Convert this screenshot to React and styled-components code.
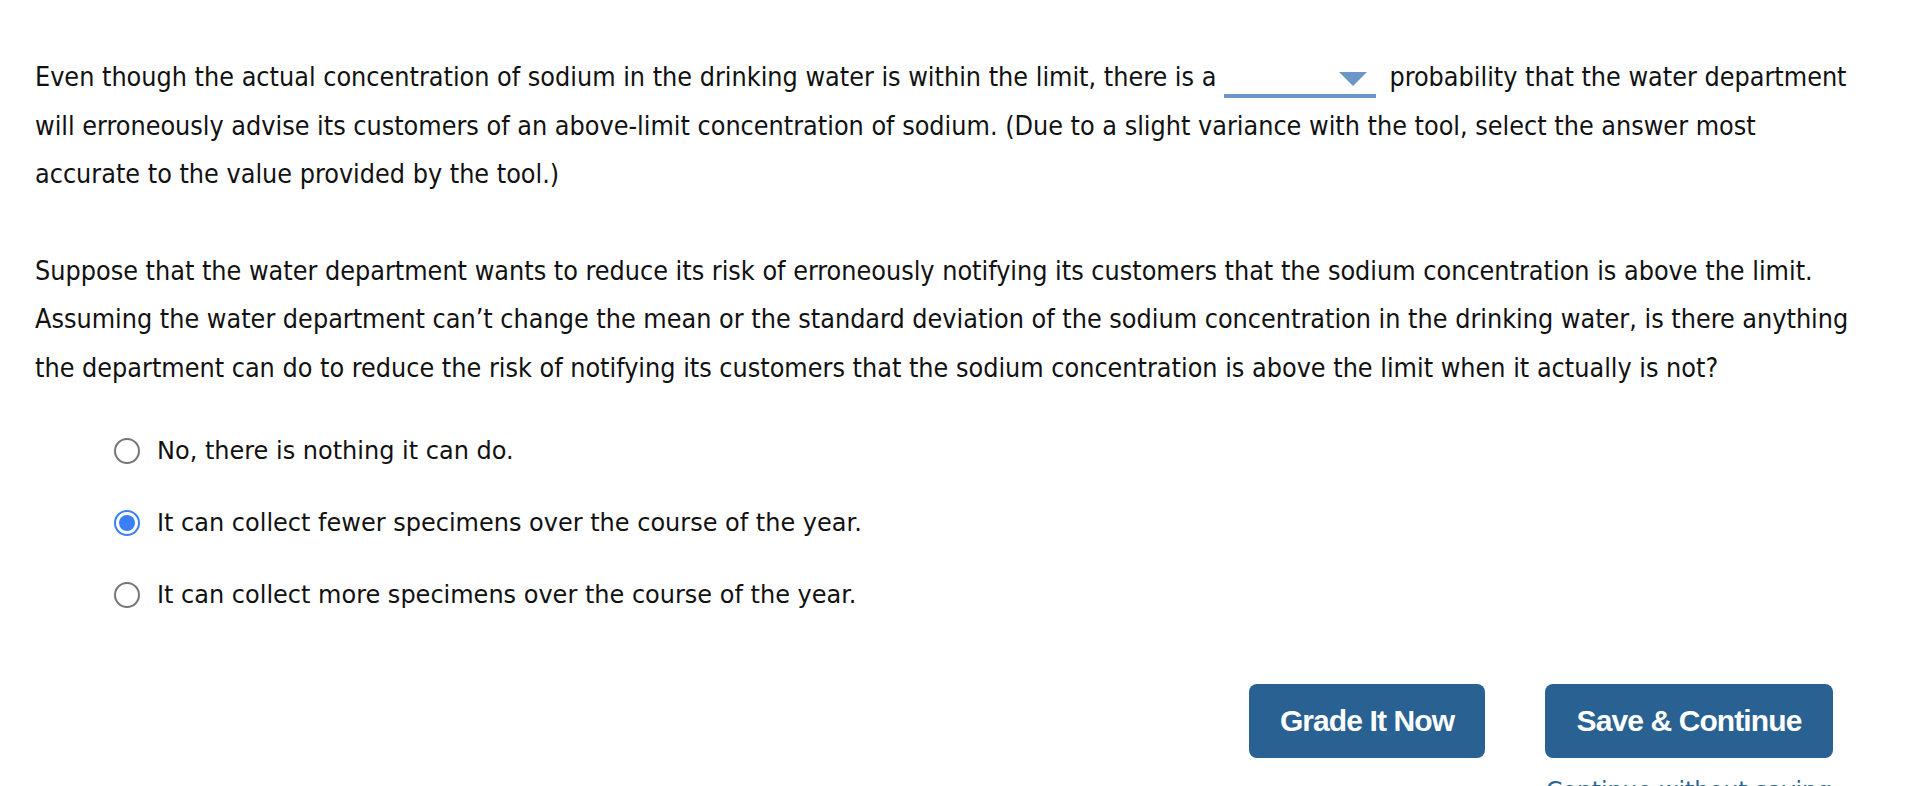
import React, { useState } from 'react';
import styled, { createGlobalStyle } from 'styled-components';

const GlobalStyle = createGlobalStyle`
  html, body {
    margin: 0;
    padding: 0;
    background: #ffffff;
  }
  body {
    font-family: "DejaVu Sans Condensed", "DejaVu Sans", sans-serif;
    color: #111111;
  }
`;

const Page = styled.div`
  padding: 53px 93px 0 35px;
  width: 1926px;
  height: 786px;
  box-sizing: border-box;
  overflow: hidden;
`;

const Paragraph = styled.p`
  margin: 0 -22px 48px 0;
  font-family: "DejaVu Sans Condensed", "DejaVu Sans", sans-serif;
  font-size: 26.7px;
  line-height: 48.5px;
  color: #111111;
`;

const Dropdown = styled.span`
  display: inline-block;
  position: relative;
  width: 152px;
  height: 26px;
  margin: 0 13px 0 8px;
  vertical-align: -12px;
  border-bottom: 4px solid #6a97c8;
`;

const Arrow = styled.span`
  position: absolute;
  right: 9px;
  top: 4px;
  width: 0;
  height: 0;
  border-left: 14.5px solid transparent;
  border-right: 14.5px solid transparent;
  border-top: 14px solid #6a97c8;
`;

const Options = styled.div`
  display: flex;
  flex-direction: column;
  gap: 46px;
  padding-left: 79px;
  margin-top: -2px;
`;

const OptionRow = styled.label`
  display: flex;
  align-items: center;
  gap: 17px;
  height: 26px;
  font-family: "DejaVu Sans", Verdana, sans-serif;
  font-size: 24px;
  color: #111111;
  cursor: pointer;
`;

const Radio = styled.span`
  width: 26px;
  height: 26px;
  box-sizing: border-box;
  border-radius: 50%;
  border: 2px solid ${p => (p.$checked ? '#3a7ff6' : '#777777')};
  display: flex;
  align-items: center;
  justify-content: center;
  flex-shrink: 0;
  &::after {
    content: '';
    width: 16px;
    height: 16px;
    border-radius: 50%;
    background: ${p => (p.$checked ? '#3a7ff6' : 'transparent')};
  }
`;

const ButtonBar = styled.div`
  display: flex;
  justify-content: flex-end;
  gap: 60px;
  margin-top: 76px;
`;

const ButtonColumn = styled.div`
  display: flex;
  flex-direction: column;
  align-items: center;
  gap: 18px;
`;

const ActionButton = styled.button`
  height: 74px;
  width: ${p => p.$w}px;
  border: none;
  border-radius: 8px;
  background: #286192;
  color: #ffffff;
  font-family: "Liberation Sans", Arial, sans-serif;
  font-weight: bold;
  font-size: 30px;
  letter-spacing: -0.9px;
  cursor: pointer;
`;

const SkipLink = styled.a`
  font-family: "DejaVu Sans", sans-serif;
  font-size: 23.5px;
  color: #2a6496;
  text-decoration: none;
`;

const choices = [
  'No, there is nothing it can do.',
  'It can collect fewer specimens over the course of the year.',
  'It can collect more specimens over the course of the year.',
];

export default function App() {
  const [picked, setPicked] = useState(1);

  return (
    <>
      <GlobalStyle />
      <Page>
        <Paragraph>
          Even though the actual concentration of sodium in the drinking water is within the limit, there is a
          <Dropdown>
            <Arrow />
          </Dropdown>
          probability that the water department will erroneously advise its customers of an above-limit
          concentration of sodium. (Due to a slight variance with the tool, select the answer most accurate to
          the value provided by the tool.)
        </Paragraph>
        <Paragraph>
          Suppose that the water department wants to reduce its risk of erroneously notifying its customers that
          the sodium concentration is above the limit. Assuming the water department can’t change the mean or the
          standard deviation of the sodium concentration in the drinking water, is there anything the department
          can do to reduce the risk of notifying its customers that the sodium concentration is above the limit
          when it actually is not?
        </Paragraph>
        <Options>
          {choices.map((c, i) => (
            <OptionRow key={i} onClick={() => setPicked(i)}>
              <Radio $checked={picked === i} />
              {c}
            </OptionRow>
          ))}
        </Options>
        <ButtonBar>
          <ButtonColumn>
            <ActionButton $w={236}>Grade It Now</ActionButton>
          </ButtonColumn>
          <ButtonColumn>
            <ActionButton $w={288}>Save &amp; Continue</ActionButton>
            <SkipLink href="#">Continue without saving</SkipLink>
          </ButtonColumn>
        </ButtonBar>
      </Page>
    </>
  );
}
